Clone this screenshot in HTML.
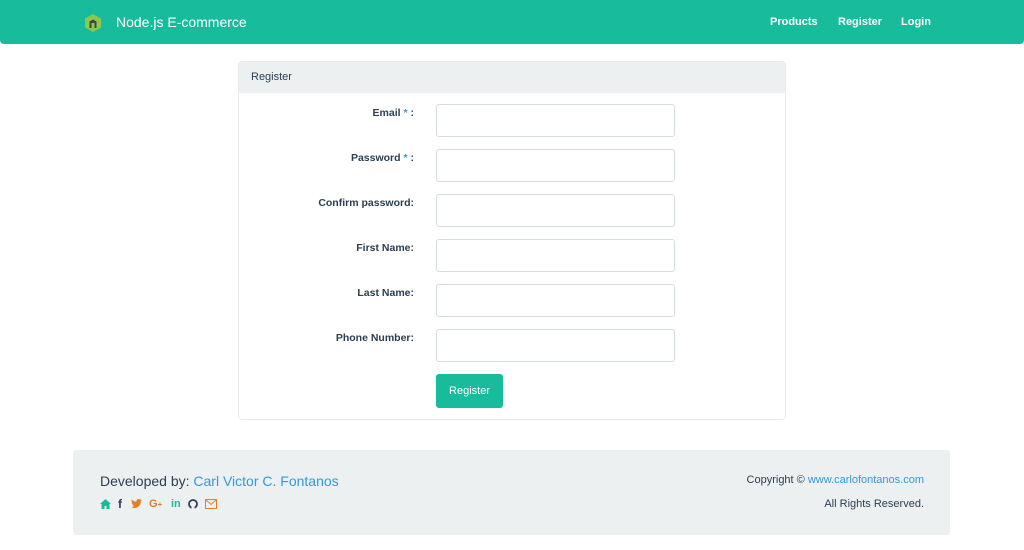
<!DOCTYPE html>
<html><head><meta charset="utf-8"><style>
body{margin:0;width:1024px;height:550px;background:#fff;font-family:"Liberation Sans",sans-serif;color:#2c3e50;position:relative;overflow:hidden}
.nav{position:absolute;left:0;top:0;width:1024px;height:44px;background:#18bc9c;border-radius:0 0 4px 4px}
.brand{position:absolute;left:116px;top:14px;color:#fff;font-size:14px}
.nl{position:absolute;top:16px;color:#fff;font-size:11px;font-weight:bold}
.panel{position:absolute;left:238px;top:61px;width:546px;height:357px;border:1px solid #e6eaeb;border-radius:4px;background:#fff}
.ph{height:31px;background:#ecf0f1;font-size:11px;line-height:31px;padding-left:12px;color:#2c3e50}
.lab{position:absolute;right:371px;font-size:10.5px;font-weight:bold;color:#2c3e50}
.inp{position:absolute;left:197px;width:237px;height:31px;border:1px solid #d5dde0;border-radius:3px}
.btn{position:absolute;left:197px;top:312px;width:67px;height:34px;background:#18bc9c;border-radius:3px;color:#fff;font-size:11px;text-align:center;line-height:34px}
.foot{position:absolute;left:73px;top:450px;width:877px;height:85px;background:#ecf0f1;border-radius:3px}
a{color:#3498db;text-decoration:none}
.ic{position:absolute;top:49px}
</style></head><body>
<div class="nav">
<svg style="position:absolute;left:85px;top:14px" width="16" height="18" viewBox="0 0 16 18"><polygon points="8,0 16,4.5 16,13.5 8,18 0,13.5 0,4.5" fill="#8cc84b"/><path d="M4.5 14V7.5L8 5.5 11.5 7.5V14H9.5V9H6.5V14Z" fill="#3c4a3c"/></svg>
<div class="brand">Node.js E-commerce</div>
<div class="nl" style="left:770px">Products</div>
<div class="nl" style="left:838px">Register</div>
<div class="nl" style="left:901px">Login</div>
</div>
<div class="panel">
<div class="ph">Register</div>
<div class="lab" style="top:45px">Email <span style="color:#3498db">*</span> :</div>
<div class="inp" style="top:42px"></div>
<div class="lab" style="top:90px">Password <span style="color:#3498db">*</span> :</div>
<div class="inp" style="top:87px"></div>
<div class="lab" style="top:135px">Confirm password:</div>
<div class="inp" style="top:132px"></div>
<div class="lab" style="top:180px">First Name:</div>
<div class="inp" style="top:177px"></div>
<div class="lab" style="top:225px">Last Name:</div>
<div class="inp" style="top:222px"></div>
<div class="lab" style="top:270px">Phone Number:</div>
<div class="inp" style="top:267px"></div>
<div class="btn">Register</div>
</div>
<div class="foot">
<div style="position:absolute;left:27px;top:23px;font-size:14px">Developed by: <a>Carl Victor C. Fontanos</a></div>
<svg class="ic" style="left:27px" width="11" height="10" viewBox="0 0 11 10"><path d="M5.5 0L0 5h1.5v5h3V7h2v3h3V5H11z" fill="#18bc9c"/></svg>
<div class="ic" style="left:45px;top:47px;font-size:12px;font-weight:bold;color:#2c3e50">f</div>
<svg class="ic" style="left:58px" width="11" height="10" viewBox="0 0 11 10"><path d="M11 1.2c-.4.2-.8.3-1.3.3.5-.3.8-.7 1-1.2-.4.3-.9.4-1.4.5A2.2 2.2 0 0 0 5.5 2.8 6.3 6.3 0 0 1 .8.5a2.2 2.2 0 0 0 .7 3c-.4 0-.7-.1-1-.3 0 1.1.8 2 1.8 2.2-.3.1-.7.1-1 0 .3.9 1.1 1.5 2.1 1.5A4.4 4.4 0 0 1 0 7.9 6.3 6.3 0 0 0 9.8 2.6V2.3c.5-.3.9-.7 1.2-1.1z" fill="#e67e22"/></svg>
<div class="ic" style="left:76px;top:48px;font-size:11px;font-weight:bold;color:#e67e22">G<span style="font-size:8px">+</span></div>
<div class="ic" style="left:98px;top:48px;font-size:11px;font-weight:bold;color:#18bc9c">in</div>
<svg class="ic" style="left:115px" width="10" height="10" viewBox="0 0 10 10"><circle cx="5" cy="5" r="4" fill="none" stroke="#2c3e50" stroke-width="1.8"/><rect x="3.5" y="7" width="3" height="3" fill="#ecf0f1"/></svg>
<svg class="ic" style="left:132px" width="12" height="10" viewBox="0 0 12 10"><rect x=".5" y=".5" width="11" height="9" fill="none" stroke="#e67e22"/><path d="M.5 .5L6 5.5 11.5.5" fill="none" stroke="#e67e22"/></svg>
<div style="position:absolute;right:26px;top:24px;font-size:11px">Copyright © <a>www.carlofontanos.com</a></div>
<div style="position:absolute;right:26px;top:48px;font-size:11px">All Rights Reserved.</div>
</div>
</body></html>
